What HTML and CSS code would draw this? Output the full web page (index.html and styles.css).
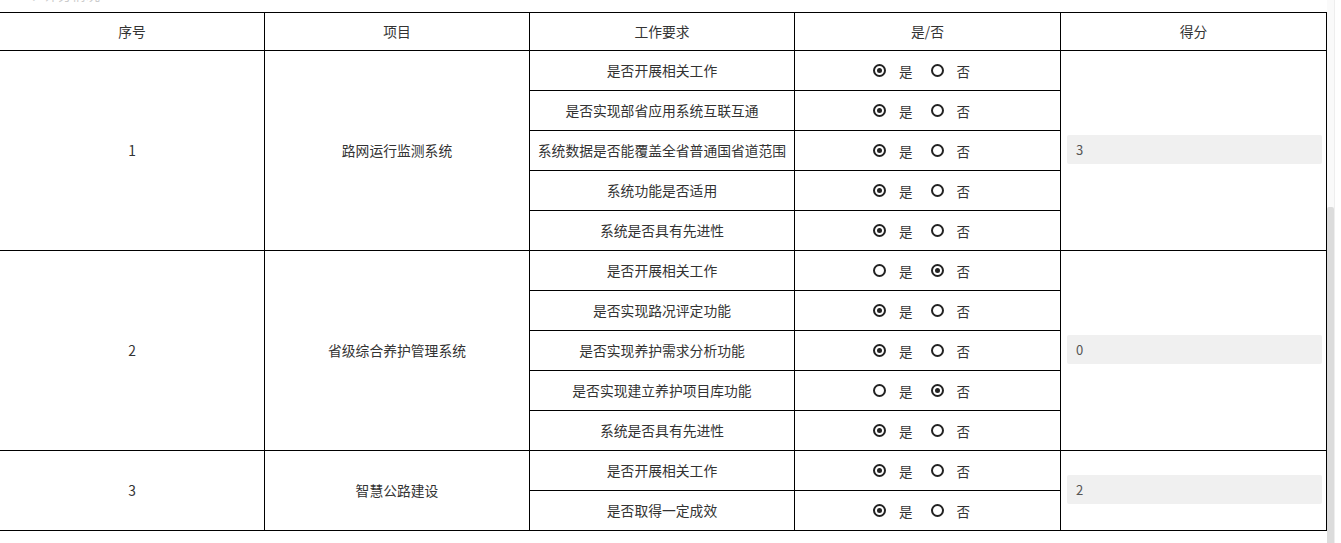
FILE: index.html
```html
<!DOCTYPE html>
<html lang="zh-CN">
<head>
<meta charset="utf-8">
<title>评分表</title>
<link rel="stylesheet" href="styles.css">
</head>
<body>
<div class="page">
  <div class="caption"><span>一、评分情况</span></div>
  <table class="score-table">
    <colgroup>
      <col class="c1"><col class="c2"><col class="c3"><col class="c4"><col class="c5">
    </colgroup>
    <thead>
      <tr class="head-row">
        <th>序号</th><th>项目</th><th>工作要求</th><th>是/否</th><th>得分</th>
      </tr>
    </thead>
    <tbody>
      <tr>
        <td rowspan="5">1</td>
        <td rowspan="5">路网运行监测系统</td>
        <td>是否开展相关工作</td>
        <td><div class="radios"><span class="opt"><i class="radio on"></i>是</span><span class="opt"><i class="radio"></i>否</span></div></td>
        <td rowspan="5" class="score"><div class="input">3</div></td>
      </tr>
      <tr>
        <td>是否实现部省应用系统互联互通</td>
        <td><div class="radios"><span class="opt"><i class="radio on"></i>是</span><span class="opt"><i class="radio"></i>否</span></div></td>
      </tr>
      <tr>
        <td>系统数据是否能覆盖全省普通国省道范围</td>
        <td><div class="radios"><span class="opt"><i class="radio on"></i>是</span><span class="opt"><i class="radio"></i>否</span></div></td>
      </tr>
      <tr>
        <td>系统功能是否适用</td>
        <td><div class="radios"><span class="opt"><i class="radio on"></i>是</span><span class="opt"><i class="radio"></i>否</span></div></td>
      </tr>
      <tr>
        <td>系统是否具有先进性</td>
        <td><div class="radios"><span class="opt"><i class="radio on"></i>是</span><span class="opt"><i class="radio"></i>否</span></div></td>
      </tr>
      <tr>
        <td rowspan="5">2</td>
        <td rowspan="5">省级综合养护管理系统</td>
        <td>是否开展相关工作</td>
        <td><div class="radios"><span class="opt"><i class="radio"></i>是</span><span class="opt"><i class="radio on"></i>否</span></div></td>
        <td rowspan="5" class="score"><div class="input">0</div></td>
      </tr>
      <tr>
        <td>是否实现路况评定功能</td>
        <td><div class="radios"><span class="opt"><i class="radio on"></i>是</span><span class="opt"><i class="radio"></i>否</span></div></td>
      </tr>
      <tr>
        <td>是否实现养护需求分析功能</td>
        <td><div class="radios"><span class="opt"><i class="radio on"></i>是</span><span class="opt"><i class="radio"></i>否</span></div></td>
      </tr>
      <tr>
        <td>是否实现建立养护项目库功能</td>
        <td><div class="radios"><span class="opt"><i class="radio"></i>是</span><span class="opt"><i class="radio on"></i>否</span></div></td>
      </tr>
      <tr>
        <td>系统是否具有先进性</td>
        <td><div class="radios"><span class="opt"><i class="radio on"></i>是</span><span class="opt"><i class="radio"></i>否</span></div></td>
      </tr>
      <tr>
        <td rowspan="2">3</td>
        <td rowspan="2">智慧公路建设</td>
        <td>是否开展相关工作</td>
        <td><div class="radios"><span class="opt"><i class="radio on"></i>是</span><span class="opt"><i class="radio"></i>否</span></div></td>
        <td rowspan="2" class="score"><div class="input">2</div></td>
      </tr>
      <tr>
        <td>是否取得一定成效</td>
        <td><div class="radios"><span class="opt"><i class="radio on"></i>是</span><span class="opt"><i class="radio"></i>否</span></div></td>
      </tr>
    </tbody>
  </table>
</div>
<div class="scrollbar"><div class="thumb"></div></div>
</body>
</html>
```

FILE: styles.css
```css
html, body {
  margin: 0;
  padding: 0;
  background: #fff;
  overflow: hidden;
}
body {
  font-family: "Noto Sans CJK SC", "Microsoft YaHei", sans-serif;
  font-size: 13.8px;
  color: #333;
  width: 1341px;
  height: 543px;
}
.page {
  margin-left: -1px;
}
.caption {
  height: 12px;
  overflow: hidden;
  padding-left: 17px;
}
.caption span {
  display: block;
  margin-top: -14px;
  font-size: 14px;
  line-height: 16px;
  color: #ccc;
}
.score-table {
  border-collapse: collapse;
  table-layout: fixed;
  width: 1327px;
}
.c1 { width: 265px; }
.c2 { width: 265px; }
.c3 { width: 265px; }
.c4 { width: 266px; }
.c5 { width: 266px; }
.score-table th,
.score-table td {
  border: 1px solid #000;
  padding: 0 0 2px 0;
  text-align: center;
  vertical-align: middle;
  font-weight: normal;
  height: 37px;
  line-height: 20px;
  white-space: nowrap;
}
.score-table th {
  height: 35px;
}
.radios {
  display: flex;
  justify-content: center;
  align-items: center;
  padding-right: 12px;
  padding-top: 2px;
  font-size: 13.5px;
}
.opt {
  display: flex;
  align-items: center;
}
.opt + .opt {
  margin-left: 18px;
}
.radio {
  box-sizing: border-box;
  width: 13px;
  height: 13px;
  border: 2px solid #222;
  border-radius: 50%;
  margin-right: 13px;
  display: flex;
  align-items: center;
  justify-content: center;
}
.radio.on::after {
  content: "";
  width: 5px;
  height: 5px;
  border-radius: 50%;
  background: #222;
}
.score-table td.score {
  text-align: left;
  padding: 0 4px 2px 6px;
}
.input {
  height: 29px;
  line-height: 29px;
  background: #f0f0f0;
  border-radius: 2px;
  padding-left: 9px;
  color: #555;
  font-size: 13px;
}
.scrollbar {
  position: absolute;
  top: 0;
  bottom: 0;
  left: 1327px;
  width: 7px;
  background: #fafafa;
  border-right: 1px solid #eee;
}
.thumb {
  position: absolute;
  left: 0;
  right: 0;
  top: 207px;
  bottom: 0;
  background: #dcdcdc;
  border-radius: 2px 2px 0 0;
}
```
